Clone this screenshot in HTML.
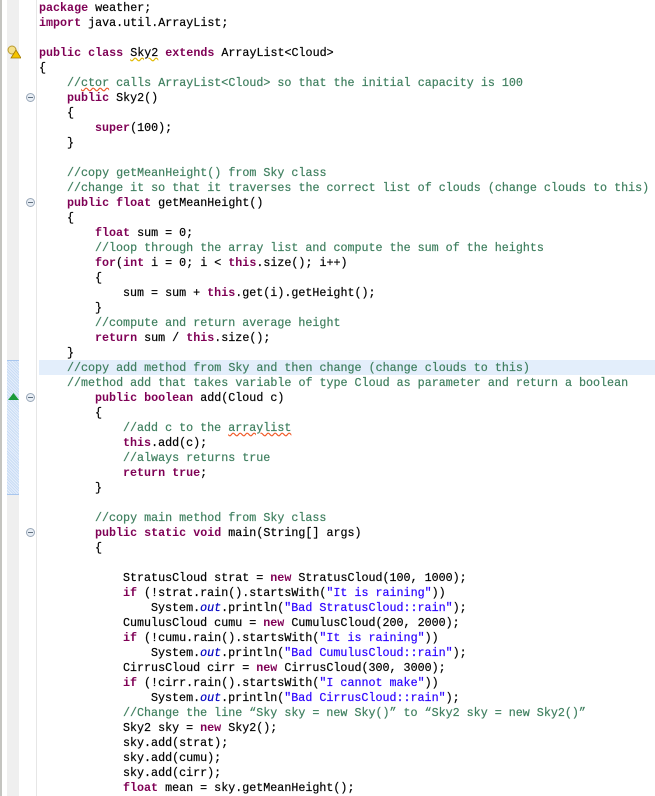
<!DOCTYPE html>
<html><head><meta charset="utf-8"><style>
body{margin:0;width:655px;height:796px;background:#fff;position:relative;overflow:hidden;font-family:"Liberation Mono","DejaVu Sans Mono",monospace;font-size:11.7px;color:#000}
.g1{position:absolute;left:0;top:0;width:2px;height:796px;background:#c4c4c0}
.g2{position:absolute;left:7px;top:0;width:12px;height:796px;background:#efefef}
.g3{position:absolute;left:36px;top:0;width:1px;height:796px;background:#e6e6e6}
.hl{position:absolute;left:39px;top:360px;width:616px;height:15px;background:#e3eefb}
.strip{position:absolute;left:7px;top:360px;width:12px;height:135px;background:repeating-linear-gradient(45deg,#c9dcf5 0 1px,#e6effb 1px 2px);border-top:1px solid #a8c6ee;border-bottom:1px solid #a8c6ee;box-sizing:border-box}
.l{position:absolute;height:15px;line-height:15px;margin-top:1px;white-space:pre;-webkit-text-stroke:0.2px currentColor}
.k{color:#7f0055;font-weight:bold;-webkit-text-stroke:0}
.c{color:#3f7f5f}
.s{color:#2a00ff}
.o{color:#0000c0;font-style:italic}
.wy{text-decoration:underline wavy #e0b800}
.wr{text-decoration:underline wavy #f05a28}
.fold{position:absolute;left:26px;width:9px;height:9px;border:1px solid #9aa8b8;border-radius:50%;background:#e8eef5;box-sizing:border-box}
.fold:after{content:"";position:absolute;left:1px;top:3px;width:5px;height:1px;background:#607080}
</style></head><body>
<div class="g1"></div><div class="g2"></div><div class="g3"></div>
<div class="hl"></div><div class="strip"></div>
<svg style="position:absolute;left:8px;top:393px" width="11" height="7"><polygon points="5.5,0 11,7 0,7" fill="#1a9a3a"/></svg>
<svg style="position:absolute;left:7px;top:45px" width="14" height="14"><circle cx="5" cy="5" r="4" fill="#f5e08a" stroke="#b89a30"/><polygon points="9,5 14,13 4,13" fill="#f5c400" stroke="#a07800" stroke-width="0.8"/></svg>
<div class="fold" style="top:93px"></div>
<div class="fold" style="top:198px"></div>
<div class="fold" style="top:393px"></div>
<div class="fold" style="top:528px"></div>

<div class="l" style="top:0;left:39px"><span class="k">package</span> weather;</div>
<div class="l" style="top:15px;left:39px"><span class="k">import</span> java.util.ArrayList;</div>
<div class="l" style="top:45px;left:39px"><span class="k">public class</span> <span class="wy">Sky2</span> <span class="k">extends</span> ArrayList&lt;Cloud&gt;</div>
<div class="l" style="top:60px;left:39px">{</div>
<div class="l c" style="top:75px;left:67px">//<span class="wr">ctor</span> calls ArrayList&lt;Cloud&gt; so that the initial capacity is 100</div>
<div class="l" style="top:90px;left:67px"><span class="k">public</span> Sky2()</div>
<div class="l" style="top:105px;left:67px">{</div>
<div class="l" style="top:120px;left:95px"><span class="k">super</span>(100);</div>
<div class="l" style="top:135px;left:67px">}</div>
<div class="l c" style="top:165px;left:67px">//copy getMeanHeight() from Sky class</div>
<div class="l c" style="top:180px;left:67px">//change it so that it traverses the correct list of clouds (change clouds to this)</div>
<div class="l" style="top:195px;left:67px"><span class="k">public float</span> getMeanHeight()</div>
<div class="l" style="top:210px;left:67px">{</div>
<div class="l" style="top:225px;left:95px"><span class="k">float</span> sum = 0;</div>
<div class="l c" style="top:240px;left:95px">//loop through the array list and compute the sum of the heights</div>
<div class="l" style="top:255px;left:95px"><span class="k">for</span>(<span class="k">int</span> i = 0; i &lt; <span class="k">this</span>.size(); i++)</div>
<div class="l" style="top:270px;left:95px">{</div>
<div class="l" style="top:285px;left:123px">sum = sum + <span class="k">this</span>.get(i).getHeight();</div>
<div class="l" style="top:300px;left:95px">}</div>
<div class="l c" style="top:315px;left:95px">//compute and return average height</div>
<div class="l" style="top:330px;left:95px"><span class="k">return</span> sum / <span class="k">this</span>.size();</div>
<div class="l" style="top:345px;left:67px">}</div>
<div class="l c" style="top:360px;left:67px">//copy add method from Sky and then change (change clouds to this)</div>
<div class="l c" style="top:375px;left:67px">//method add that takes variable of type Cloud as parameter and return a boolean</div>
<div class="l" style="top:390px;left:95px"><span class="k">public boolean</span> add(Cloud c)</div>
<div class="l" style="top:405px;left:95px">{</div>
<div class="l c" style="top:420px;left:123px">//add c to the <span class="wr">arraylist</span></div>
<div class="l" style="top:435px;left:123px"><span class="k">this</span>.add(c);</div>
<div class="l c" style="top:450px;left:123px">//always returns true</div>
<div class="l" style="top:465px;left:123px"><span class="k">return true</span>;</div>
<div class="l" style="top:480px;left:95px">}</div>
<div class="l c" style="top:510px;left:95px">//copy main method from Sky class</div>
<div class="l" style="top:525px;left:95px"><span class="k">public static void</span> main(String[] args)</div>
<div class="l" style="top:540px;left:95px">{</div>
<div class="l" style="top:570px;left:123px">StratusCloud strat = <span class="k">new</span> StratusCloud(100, 1000);</div>
<div class="l" style="top:585px;left:123px"><span class="k">if</span> (!strat.rain().startsWith(<span class="s">"It is raining"</span>))</div>
<div class="l" style="top:600px;left:151px">System.<span class="o">out</span>.println(<span class="s">"Bad StratusCloud::rain"</span>);</div>
<div class="l" style="top:615px;left:123px">CumulusCloud cumu = <span class="k">new</span> CumulusCloud(200, 2000);</div>
<div class="l" style="top:630px;left:123px"><span class="k">if</span> (!cumu.rain().startsWith(<span class="s">"It is raining"</span>))</div>
<div class="l" style="top:645px;left:151px">System.<span class="o">out</span>.println(<span class="s">"Bad CumulusCloud::rain"</span>);</div>
<div class="l" style="top:660px;left:123px">CirrusCloud cirr = <span class="k">new</span> CirrusCloud(300, 3000);</div>
<div class="l" style="top:675px;left:123px"><span class="k">if</span> (!cirr.rain().startsWith(<span class="s">"I cannot make"</span>))</div>
<div class="l" style="top:690px;left:151px">System.<span class="o">out</span>.println(<span class="s">"Bad CirrusCloud::rain"</span>);</div>
<div class="l c" style="top:705px;left:123px">//Change the line “Sky sky = new Sky()” to “Sky2 sky = new Sky2()”</div>
<div class="l" style="top:720px;left:123px">Sky2 sky = <span class="k">new</span> Sky2();</div>
<div class="l" style="top:735px;left:123px">sky.add(strat);</div>
<div class="l" style="top:750px;left:123px">sky.add(cumu);</div>
<div class="l" style="top:765px;left:123px">sky.add(cirr);</div>
<div class="l" style="top:780px;left:123px"><span class="k">float</span> mean = sky.getMeanHeight();</div>
</body></html>
